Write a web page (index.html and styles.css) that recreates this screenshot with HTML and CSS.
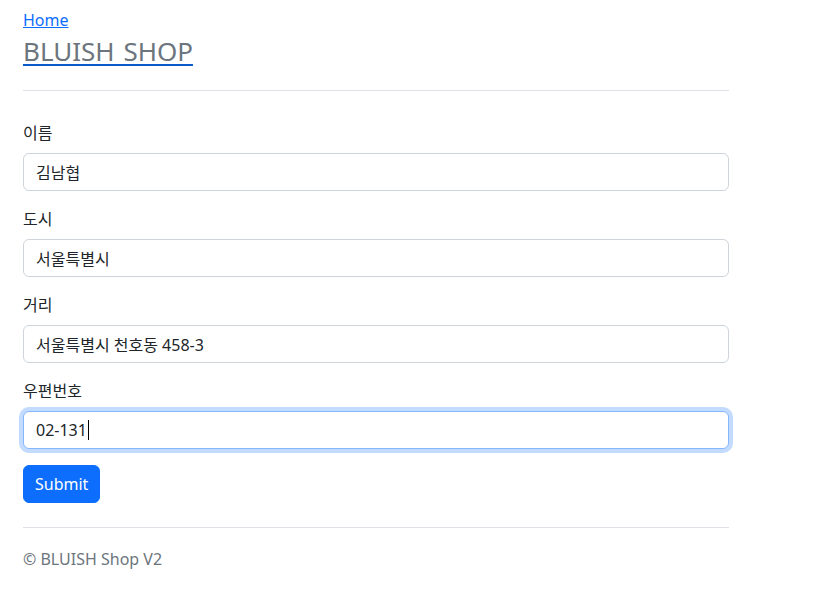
FILE: index.html
```html
<!DOCTYPE html>
<html lang="ko">
<head>
<meta charset="utf-8">
<title>BLUISH SHOP</title>
<link rel="stylesheet" href="styles.css">
</head>
<body>
<div class="container">
  <header class="header">
    <a class="home-link" href="#">Home</a>
    <a class="brand" href="#">BLUISH SHOP</a>
  </header>
  <hr class="divider">
  <form class="form">
    <div class="field">
      <label class="label" for="name">이름</label>
      <input class="input" id="name" type="text" value="김남협">
    </div>
    <div class="field">
      <label class="label" for="city">도시</label>
      <input class="input" id="city" type="text" value="서울특별시">
    </div>
    <div class="field">
      <label class="label" for="street">거리</label>
      <input class="input" id="street" type="text" value="서울특별시 천호동 458-3">
    </div>
    <div class="field">
      <label class="label" for="zip">우편번호</label>
      <div class="input input-focus" id="zip"><span class="value">02-131</span><span class="caret"></span></div>
    </div>
    <button class="btn" type="button">Submit</button>
  </form>
  <hr class="divider footer-divider">
  <footer class="footer">© BLUISH Shop V2</footer>
</div>
</body>
</html>
```
FILE: styles.css
```css
* { box-sizing: border-box; }
html, body { margin: 0; padding: 0; background: #fff; }
body {
  font-family: "Noto Sans", "Noto Sans CJK KR", sans-serif;
  font-size: 16px;
  line-height: 1.5;
  color: #212529;
}
.container {
  width: 730px;
  padding: 8px 0 0 23px;
}
.header {
  display: flex;
  flex-direction: column;
  align-items: flex-start;
}
.home-link {
  color: #0d6efd;
  text-decoration: underline;
  font-size: 16px;
  line-height: 24px;
}
.brand {
  margin-top: 4px;
  font-size: 26px;
  line-height: 30px;
  color: #6c757d;
  text-decoration: underline;
  text-decoration-color: #0a58ca;
  text-underline-offset: 3px;
  word-spacing: 2px;
}
.divider {
  border: 0;
  border-top: 1px solid #dee2e6;
  margin: 24px 0 0;
  width: 706px;
}
.form {
  padding-top: 30px;
  width: 706px;
}
.field { margin-bottom: 16px; }
.label {
  display: block;
  margin-bottom: 8px;
  line-height: 24px;
}
.input {
  display: flex;
  align-items: center;
  width: 100%;
  height: 38px;
  padding: 6px 12px;
  font-family: inherit;
  font-size: 16px;
  line-height: 24px;
  color: #212529;
  background: #fff;
  border: 1px solid #ced4da;
  border-radius: 6px;
  outline: none;
}
.input-focus {
  border-color: #86b7fe;
  box-shadow: 0 0 0 4px rgba(13, 110, 253, 0.25);
}
.caret {
  display: inline-block;
  width: 1px;
  height: 20px;
  background: #000;
  margin-left: 1px;
}
.btn {
  display: block;
  height: 38px;
  padding: 6px 11px;
  font-family: inherit;
  font-size: 16px;
  line-height: 24px;
  color: #fff;
  background: #0d6efd;
  border: 1px solid #0d6efd;
  border-radius: 6px;
}
.footer-divider { margin-top: 24px; }
.footer {
  padding-top: 19px;
  color: #6c757d;
  line-height: 24px;
}
```
